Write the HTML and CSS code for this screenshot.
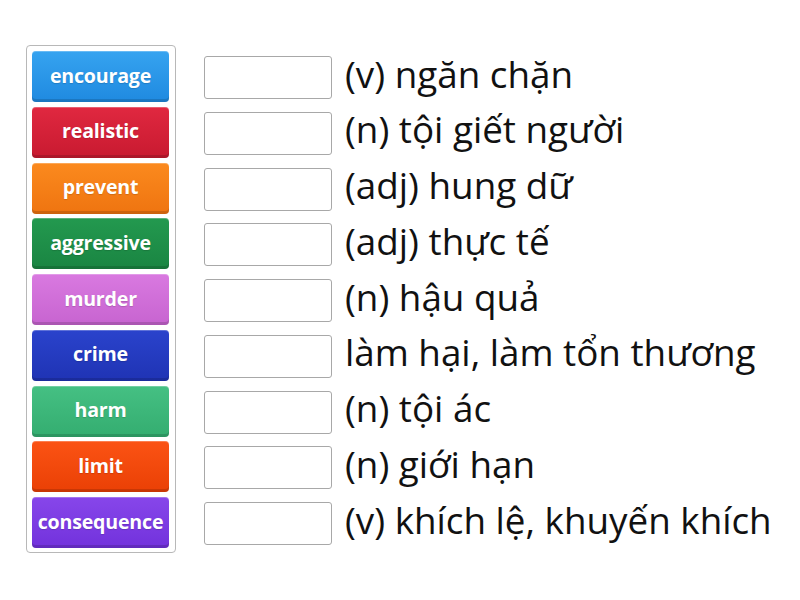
FILE: index.html
```html
<!DOCTYPE html>
<html>
<head>
<meta charset="utf-8">
<link rel="stylesheet" href="styles.css">
</head>
<body>
<div class="page">
  <div class="bank">
    <div class="tile c1">encourage</div>
    <div class="tile c2">realistic</div>
    <div class="tile c3">prevent</div>
    <div class="tile c4">aggressive</div>
    <div class="tile c5">murder</div>
    <div class="tile c6">crime</div>
    <div class="tile c7">harm</div>
    <div class="tile c8">limit</div>
    <div class="tile c9">consequence</div>
  </div>
  <div class="list">
    <div class="row"><div class="slot"></div><div class="def">(v) ngăn chặn</div></div>
    <div class="row"><div class="slot"></div><div class="def">(n) tội giết người</div></div>
    <div class="row"><div class="slot"></div><div class="def">(adj) hung dữ</div></div>
    <div class="row"><div class="slot"></div><div class="def">(adj) thực tế</div></div>
    <div class="row"><div class="slot"></div><div class="def">(n) hậu quả</div></div>
    <div class="row"><div class="slot"></div><div class="def">làm hại, làm tổn thương</div></div>
    <div class="row"><div class="slot"></div><div class="def">(n) tội ác</div></div>
    <div class="row"><div class="slot"></div><div class="def">(n) giới hạn</div></div>
    <div class="row"><div class="slot"></div><div class="def">(v) khích lệ, khuyến khích</div></div>
  </div>
</div>
</body>
</html>
```

FILE: styles.css
```css
html, body {
  margin: 0;
  padding: 0;
  background: #fff;
}
body {
  font-family: "Open Sans", "DejaVu Sans", sans-serif;
  width: 800px;
  height: 600px;
  overflow: hidden;
}
.page {
  display: flex;
  align-items: flex-start;
  padding: 45px 0 0 26px;
}
.bank {
  border: 1px solid #b8b8b8;
  border-radius: 4px;
  padding: 5px 6px 4px 5px;
  box-sizing: border-box;
  width: 150px;
  display: flex;
  flex-direction: column;
  gap: 4.75px;
}
.tile {
  height: 51px;
  box-sizing: border-box;
  padding-bottom: 3px;
  border-radius: 4px;
  display: flex;
  align-items: center;
  justify-content: center;
  color: #fff;
  font-weight: 700;
  font-size: 19.6px;
  letter-spacing: -0.2px;
  white-space: nowrap;
  box-shadow: inset 0 -3px 0 rgba(0,0,0,0.14), inset 0 1px 0 rgba(255,255,255,0.25);
  text-shadow: 0 1px 1px rgba(0,0,0,0.15);
}
.c1 { background: linear-gradient(#36a3f0, #1f8ae0); }
.c2 { background: linear-gradient(#e02840, #c81a30); }
.c3 { background: linear-gradient(#fb8a1e, #ef7410); }
.c4 { background: linear-gradient(#23994f, #1a8542); }
.c5 { background: linear-gradient(#d979e0, #c764d0); }
.c6 { background: linear-gradient(#2a43cc, #1f33b4); }
.c7 { background: linear-gradient(#45c083, #34ad70); }
.c8 { background: linear-gradient(#fb5314, #ea4005); }
.c9 { background: linear-gradient(#8746ea, #7232dc); }
.list {
  margin-left: 28px;
  padding-top: 6px;
  display: flex;
  flex-direction: column;
  gap: 4.75px;
}
.row {
  height: 51px;
  display: flex;
  align-items: center;
}
.slot {
  width: 128px;
  height: 43px;
  box-sizing: border-box;
  border: 1px solid #a8a8a8;
  border-radius: 3px;
  background: #fff;
  margin-top: 2px;
}
.def {
  margin-left: 13px;
  font-size: 36.8px;
  color: #111;
  white-space: nowrap;
  line-height: 1;
  margin-top: -5px;
}
```
